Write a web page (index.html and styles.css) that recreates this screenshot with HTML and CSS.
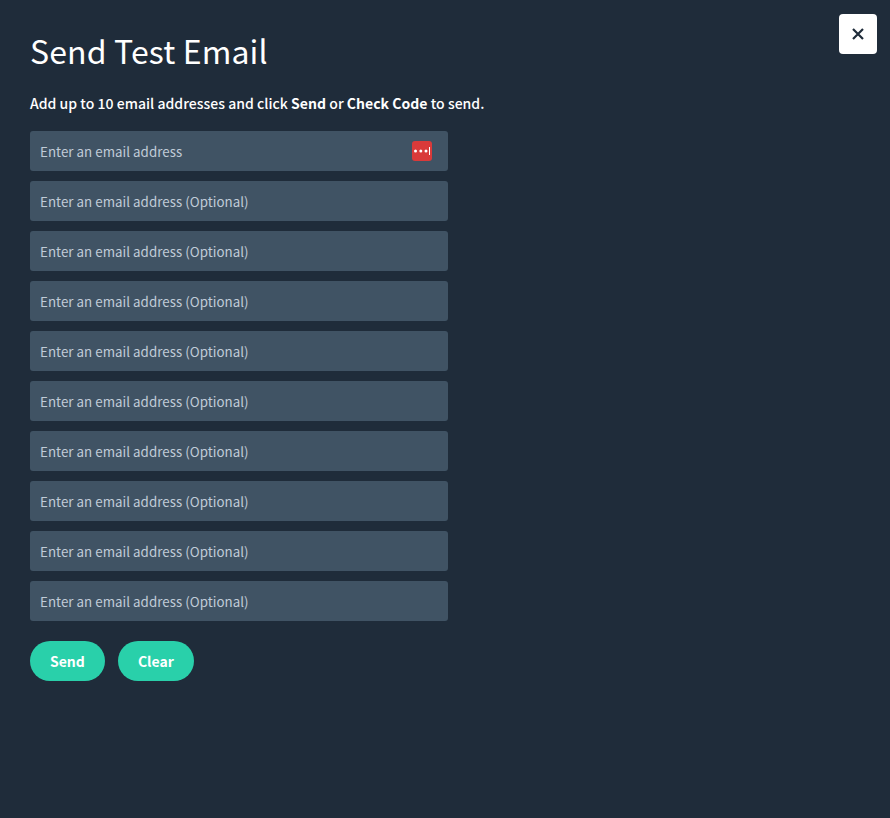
FILE: index.html
```html
<!DOCTYPE html>
<html lang="en">
<head>
<meta charset="utf-8">
<title>Send Test Email</title>
<link rel="stylesheet" href="styles.css">
</head>
<body>
<button class="close" type="button" aria-label="Close">
  <svg width="12" height="12" viewBox="0 0 12 12"><path d="M1 1L11 11M11 1L1 11" fill="none" stroke="#1f2c3a" stroke-width="2.2"/></svg>
</button>
<main class="panel">
  <h1 class="title">Send Test Email</h1>
  <p class="intro">Add up to 10 email addresses and click <strong>Send</strong> or <strong>Check Code</strong> to send.</p>
  <form class="fields">
    <div class="field">
      <input class="input" type="text" placeholder="Enter an email address">
      <span class="lp-icon"><svg width="16" height="8" viewBox="0 0 16 8"><circle cx="1.5" cy="4" r="1.5" fill="#fff"/><circle cx="6.8" cy="4" r="1.5" fill="#fff"/><circle cx="12" cy="4" r="1.5" fill="#fff"/><rect x="15" y="0" width="1" height="8" fill="#fff"/></svg></span>
    </div>
    <div class="field"><input class="input" type="text" placeholder="Enter an email address (Optional)"></div>
    <div class="field"><input class="input" type="text" placeholder="Enter an email address (Optional)"></div>
    <div class="field"><input class="input" type="text" placeholder="Enter an email address (Optional)"></div>
    <div class="field"><input class="input" type="text" placeholder="Enter an email address (Optional)"></div>
    <div class="field"><input class="input" type="text" placeholder="Enter an email address (Optional)"></div>
    <div class="field"><input class="input" type="text" placeholder="Enter an email address (Optional)"></div>
    <div class="field"><input class="input" type="text" placeholder="Enter an email address (Optional)"></div>
    <div class="field"><input class="input" type="text" placeholder="Enter an email address (Optional)"></div>
    <div class="field"><input class="input" type="text" placeholder="Enter an email address (Optional)"></div>
    <div class="actions">
      <button class="btn" type="button">Send</button>
      <button class="btn" type="button">Clear</button>
    </div>
  </form>
</main>
</body>
</html>
```
FILE: styles.css
```css
html, body { margin: 0; height: 100%; }
body {
  background: #1f2c3a;
  color: #fff;
  font-family: "Noto Sans CJK SC", "Noto Sans", sans-serif;
  overflow: hidden;
}
.panel { padding: 28px 30px 0; width: 600px; }
.title { margin: 0; font-size: 32px; font-weight: 400; line-height: 44px; letter-spacing: 0.13px; }
.intro { margin: 20px 0 0; font-size: 14px; line-height: 22px; font-weight: 500; letter-spacing: 0.03px; }
.intro strong { font-weight: 700; }
.fields { margin-top: 17px; display: flex; flex-direction: column; gap: 10px; width: 418px; }
.field { position: relative; height: 40px; }
.input {
  box-sizing: border-box;
  display: block;
  width: 100%;
  height: 40px;
  padding: 0 10px;
  border: 0;
  border-radius: 3px;
  background: #405364;
  color: #fff;
  font: 400 13.33px "Noto Sans CJK SC", "Noto Sans", sans-serif;
  letter-spacing: 0.03px;
}
.input::placeholder { color: #c0ccd8; opacity: 1; }
.lp-icon {
  position: absolute;
  top: 10px;
  right: 16px;
  width: 20px;
  height: 20px;
  border-radius: 3px;
  background: #d93a3a;
  display: flex;
  align-items: center;
  justify-content: center;
}
.actions { display: flex; gap: 13px; margin-top: 10px; }
.btn {
  height: 40px;
  padding: 0 20px;
  border: 0;
  border-radius: 20px;
  background: #29d0aa;
  color: #fff;
  font: 700 14px "Noto Sans CJK SC", "Noto Sans", sans-serif;
}
.close {
  position: absolute;
  top: 14px;
  right: 13px;
  width: 38px;
  height: 40px;
  padding: 0;
  border: 0;
  border-radius: 4px;
  background: #fff;
  display: flex;
  align-items: center;
  justify-content: center;
}
```
